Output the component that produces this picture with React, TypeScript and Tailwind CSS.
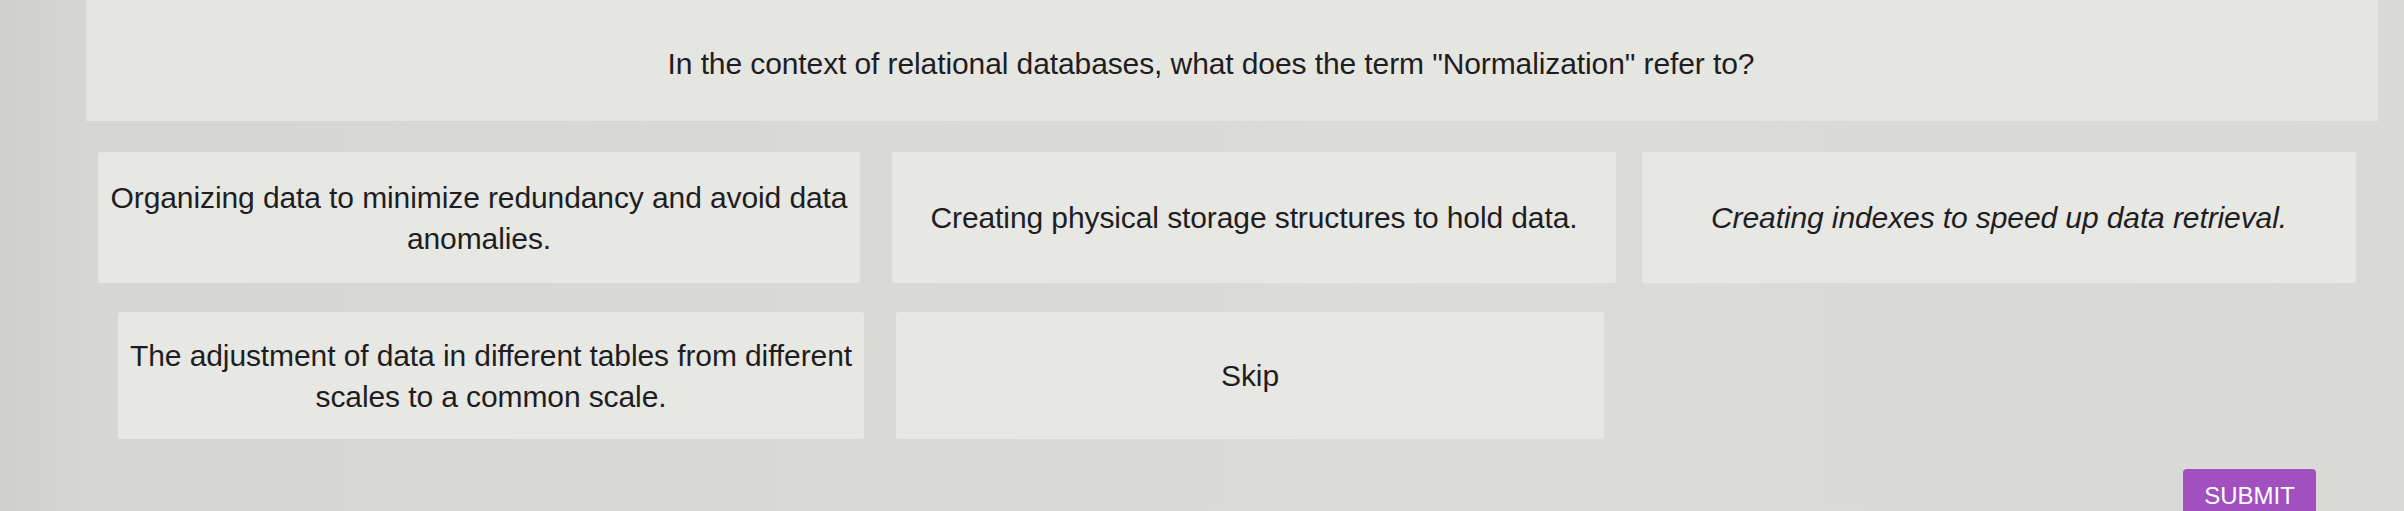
const options = [
  { text: 'Organizing data to minimize redundancy and avoid data anomalies.', cls: '' },
  { text: 'Creating physical storage structures to hold data.', cls: 'ml-[6px]' },
  { text: 'Creating indexes to speed up data retrieval.', cls: 'italic' },
  { text: 'The adjustment of data in different tables from different scales to a common scale.', cls: 'ml-[20px] mr-[-4px]' },
  { text: 'Skip', cls: 'ml-[10px] mr-[12px]' },
]

export default function App() {
  return (
    <div
      className="h-[511px] w-[2404px] overflow-hidden bg-[linear-gradient(90deg,#cfcfcd_0px,#d6d6d3_86px,#dbdbd8_60%,#d9d9d7_100%)] text-[#1e1e22]"
      style={{ fontFamily: '"Liberation Sans", Arial, sans-serif' }}
    >
      <div className="ml-[86px] mr-[26px] flex h-[121px] items-center justify-center bg-[#e5e5e1]">
        <div className="pr-[42px] pt-[6px] text-[30px] tracking-[-0.1px]">
          In the context of relational databases, what does the term "Normalization" refer to?
        </div>
      </div>

      <div className="ml-[98px] mt-[31px] grid grid-cols-[762px_730px_714px] gap-x-[26px] gap-y-[29px]">
        {options.map((o, i) => (
          <button
            key={i}
            className={`flex items-center justify-center rounded-[3px] bg-[#e7e7e3] px-[6px] text-center text-[30px] leading-[41px] tracking-[-0.1px] ${
              i < 3 ? 'h-[131px]' : 'h-[127px]'
            } ${o.cls}`}
          >
            {o.text}
          </button>
        ))}
      </div>

      <div className="mr-[88px] mt-[30px] flex justify-end">
        <button className="flex h-[60px] w-[133px] justify-center rounded-t-[4px] bg-[#a250c0] pt-[15px] text-[24px] leading-[24px] text-white">
          SUBMIT
        </button>
      </div>
    </div>
  )
}
